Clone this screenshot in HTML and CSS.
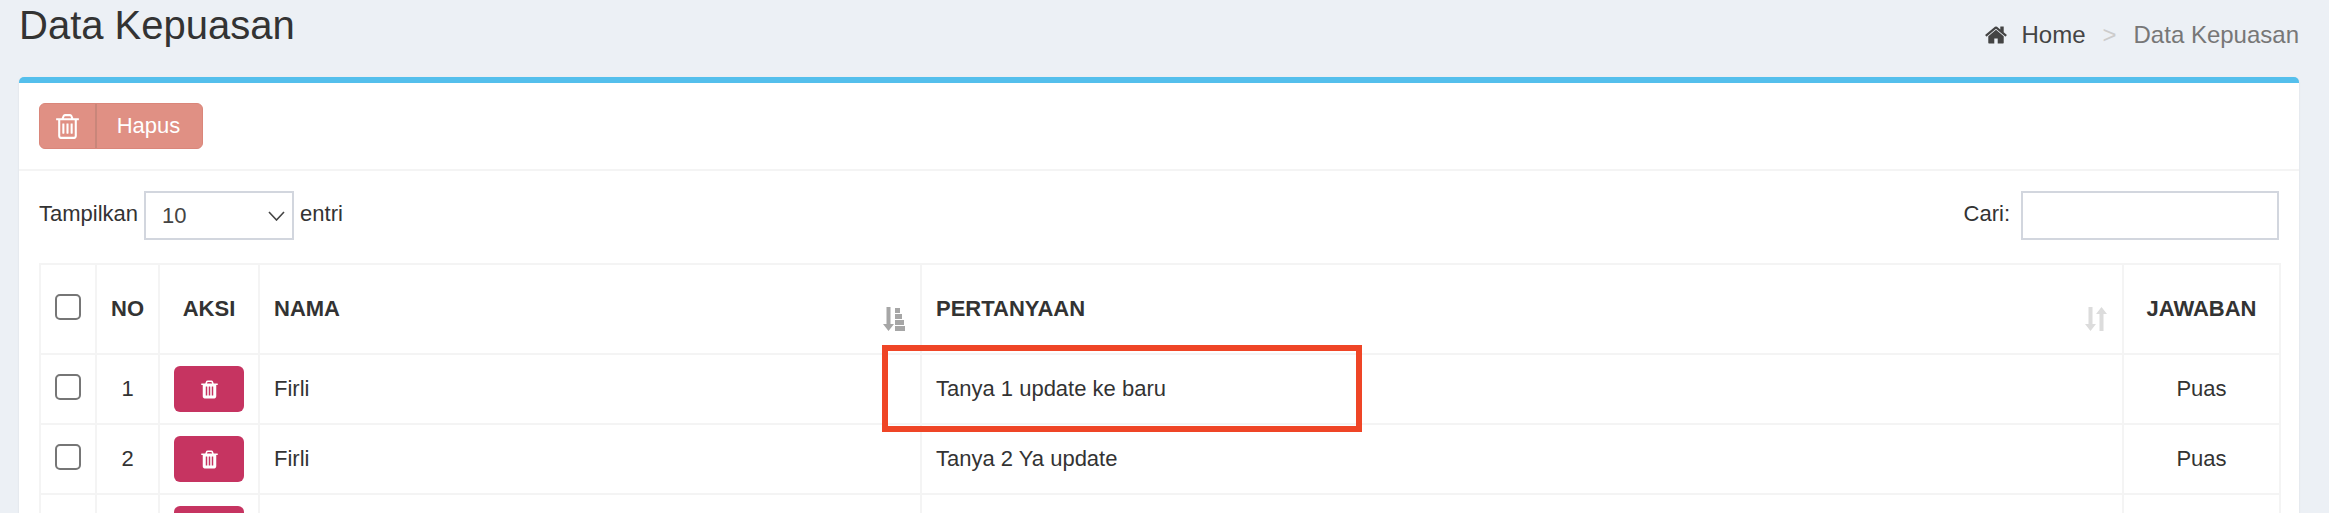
FILE: index.html
```html
<!DOCTYPE html>
<html lang="id">
<head>
    <meta charset="UTF-8">
    <meta name="viewport" content="width=device-width, initial-scale=1.0">
    <title>Data Kepuasan</title>
    <link rel="stylesheet" href="styles.css">
</head>
<body>
    <svg class="icon-defs" width="0" height="0" aria-hidden="true">
        <symbol id="i-trash" viewBox="0 0 1792 1792">
            <path d="M704 1376v-704q0-14-9-23t-23-9h-64q-14 0-23 9t-9 23v704q0 14 9 23t23 9h64q14 0 23-9t9-23zm256 0v-704q0-14-9-23t-23-9h-64q-14 0-23 9t-9 23v704q0 14 9 23t23 9h64q14 0 23-9t9-23zm256 0v-704q0-14-9-23t-23-9h-64q-14 0-23 9t-9 23v704q0 14 9 23t23 9h64q14 0 23-9t9-23zm-544-992h448l-48-117q-7-9-17-11h-317q-10 2-17 11zm928 32v64q0 14-9 23t-23 9h-96v948q0 83-47 143.500t-113 60.500h-832q-66 0-113-58.500t-47-141.500v-952h-96q-14 0-23-9t-9-23v-64q0-14 9-23t23-9h309l70-167q15-37 54-63t79-26h320q40 0 79 26t54 63l70 167h309q14 0 23 9t9 23z"/>
        </symbol>
        <symbol id="i-trash-o" viewBox="0 0 1792 1792">
            <path d="M704 736v576q0 14-9 23t-23 9h-64q-14 0-23-9t-9-23v-576q0-14 9-23t23-9h64q14 0 23 9t9 23zm256 0v576q0 14-9 23t-23 9h-64q-14 0-23-9t-9-23v-576q0-14 9-23t23-9h64q14 0 23 9t9 23zm256 0v576q0 14-9 23t-23 9h-64q-14 0-23-9t-9-23v-576q0-14 9-23t23-9h64q14 0 23 9t9 23zm128 724v-948h-896v948q0 22 7 40.500t14.500 27 10.500 8.500h832q3 0 10.500-8.500t14.500-27 7-40.500zm-672-1076h448l-48-117q-7-9-17-11h-317q-10 2-17 11zm928 32v64q0 14-9 23t-23 9h-96v948q0 83-47 143.500t-113 60.500h-832q-66 0-113-58.500t-47-141.500v-952h-96q-14 0-23-9t-9-23v-64q0-14 9-23t23-9h309l70-167q15-37 54-63t79-26h320q40 0 79 26t54 63l70 167h309q14 0 23 9t9 23z"/>
        </symbol>
        <symbol id="i-home" viewBox="0 0 1792 1792">
            <path d="M1472 992v480q0 26-19 45t-45 19h-384v-384h-256v384h-384q-26 0-45-19t-19-45v-480q0-1 .5-3t.5-3l575-474 575 474q1 2 1 6zm223-69l-62 74q-8 9-21 11h-3q-13 0-21-7l-692-577-692 577q-12 8-24 7-13-2-21-11l-62-74q-8-10-7-23.500t11-21.500l719-599q32-26 76-26t76 26l244 204v-195q0-14 9-23t23-9h192q14 0 23 9t9 23v408l219 182q10 8 11 21.500t-7 23.500z"/>
        </symbol>
    </svg>

    <header class="page-head">
        <h1>Data Kepuasan</h1>
        <ol class="breadcrumb">
            <li class="crumb-home">
                <svg class="icon-home"><use href="#i-home"/></svg>
                <span>Home</span>
            </li>
            <li class="crumb-sep">&gt;</li>
            <li class="crumb-active">Data Kepuasan</li>
        </ol>
    </header>

    <section class="box">
        <div class="box-header">
            <button type="button" class="btn-hapus">
                <span class="btn-icon"><svg class="icon-trash-o"><use href="#i-trash-o"/></svg></span>
                <span class="btn-label">Hapus</span>
            </button>
        </div>

        <div class="box-body">
            <div class="table-tools">
                <label class="length">
                    Tampilkan
                    <span class="select-wrap">
                        <select>
                            <option>10</option>
                            <option>25</option>
                            <option>50</option>
                        </select>
                        <svg class="chevron" viewBox="0 0 17 10"><path d="M1 1l7.500 8L16 1" fill="none" stroke="#444" stroke-width="1.600"/></svg>
                    </span>
                    entri
                </label>
                <label class="search">
                    Cari:
                    <input type="search">
                </label>
            </div>

            <table class="data-table">
                <colgroup>
                    <col class="col-check">
                    <col class="col-no">
                    <col class="col-aksi">
                    <col class="col-nama">
                    <col class="col-tanya">
                    <col class="col-jawab">
                </colgroup>
                <thead>
                    <tr>
                        <th class="center"><input type="checkbox" class="check"></th>
                        <th class="center">NO</th>
                        <th class="center">AKSI</th>
                        <th class="sortable">NAMA
                            <svg class="sort-icon sort-active" viewBox="0 0 22 24">
                                <path d="M3.500 0h4v17H11l-5.500 7L0 17h3.500z"/>
                                <path d="M12 1h5v5h-5zM12 7h7v5h-7zM12 13h9v5h-9zM12 19h10v5H12z"/>
                            </svg>
                        </th>
                        <th class="sortable">PERTANYAAN
                            <svg class="sort-icon" viewBox="0 0 22 24">
                                <path d="M3.500 0h4v17H11l-5.500 7L0 17h3.500z"/>
                                <path d="M14.500 24h4V7H22l-5.500-7L11 7h3.500z"/>
                            </svg>
                        </th>
                        <th class="center">JAWABAN</th>
                    </tr>
                </thead>
                <tbody>
                    <tr>
                        <td class="center"><input type="checkbox" class="check"></td>
                        <td class="center">1</td>
                        <td class="center"><button type="button" class="btn-del"><svg class="icon-trash"><use href="#i-trash"/></svg></button></td>
                        <td>Firli</td>
                        <td>Tanya 1 update ke baru</td>
                        <td class="center">Puas</td>
                    </tr>
                    <tr>
                        <td class="center"><input type="checkbox" class="check"></td>
                        <td class="center">2</td>
                        <td class="center"><button type="button" class="btn-del"><svg class="icon-trash"><use href="#i-trash"/></svg></button></td>
                        <td>Firli</td>
                        <td>Tanya 2 Ya update</td>
                        <td class="center">Puas</td>
                    </tr>
                    <tr>
                        <td class="center"><input type="checkbox" class="check"></td>
                        <td class="center"></td>
                        <td class="center"><button type="button" class="btn-del"><svg class="icon-trash"><use href="#i-trash"/></svg></button></td>
                        <td></td>
                        <td></td>
                        <td class="center"></td>
                    </tr>
                </tbody>
            </table>
        </div>
    </section>

    <!-- kotak penanda di atas tabel -->
    <div class="marker"></div>
</body>
</html>
```

FILE: styles.css
```css
html, body {
    height: 513px;
    overflow: hidden;
}
body {
    position: relative;
    margin: 0;
    padding: 0 30px 0 19px;
    background: #ecf0f5;
    color: #333;
    font-family: "Liberation Sans", Arial, sans-serif;
    font-size: 22px;
}
.icon-defs {
    position: absolute;
}

/* judul halaman */
.page-head {
    display: flex;
    justify-content: space-between;
    height: 77px;
}
.page-head h1 {
    margin: 0;
    padding: 2px 0 0;
    font-size: 40px;
    font-weight: normal;
    line-height: 46px;
}
.breadcrumb {
    display: flex;
    margin: 0;
    padding: 21px 0 0;
    list-style: none;
    font-size: 24px;
    line-height: 28px;
}
.crumb-home {
    display: flex;
    align-items: center;
    gap: 13px;
    height: 28px;
    color: #444;
}
.icon-home {
    width: 24px;
    height: 24px;
    fill: #444;
}
.crumb-sep {
    margin: 0 17px;
    color: #ccc;
}
.crumb-active {
    color: #777;
}

/* box */
.box {
    background: #fff;
    border-top: 6px solid #54bfec;
    border-radius: 5px;
    box-shadow: 0 1px 2px rgba(0, 0, 0, 0.1);
}
.box-header {
    padding: 20px 20px 20px;
    border-bottom: 2px solid #f4f4f4;
}
.btn-hapus {
    display: flex;
    align-items: stretch;
    width: 164px;
    height: 46px;
    padding: 0;
    border: 1px solid #da867a;
    border-radius: 6px;
    background: #e09084;
    color: #fff;
    font-family: inherit;
    font-size: 22px;
}
.btn-icon {
    display: flex;
    align-items: center;
    justify-content: center;
    width: 55px;
    border-right: 2px solid #c9867a;
}
.icon-trash-o {
    width: 29px;
    height: 29px;
    fill: #fff;
}
.btn-label {
    flex: 1;
    padding-right: 2px;
    line-height: 44px;
    text-align: center;
}
.box-body {
    padding: 20px;
}

/* atas tabel */
.table-tools {
    display: flex;
    justify-content: space-between;
    height: 49px;
    margin-bottom: 23px;
}
.length, .search {
    display: flex;
    align-items: center;
    gap: 6px;
    height: 46px;
}
.select-wrap {
    position: relative;
    display: block;
    margin-top: 3px;
}
.select-wrap select {
    display: block;
    width: 150px;
    height: 49px;
    padding: 0 0 0 16px;
    border: 2px solid #d2d6de;
    border-radius: 0;
    background: #fff;
    color: #444;
    font-family: inherit;
    font-size: 22px;
    appearance: none;
}
.chevron {
    position: absolute;
    top: 20px;
    right: 9px;
    width: 17px;
    height: 10px;
}
.search {
    gap: 11px;
}
.search input {
    box-sizing: border-box;
    width: 258px;
    height: 49px;
    margin-top: 3px;
    border: 2px solid #d2d6de;
    border-radius: 0;
    background: #fff;
    appearance: none;
}

/* tabel */
.data-table {
    width: 2240px;
    border-collapse: collapse;
    table-layout: fixed;
}
.col-check { width: 56px; }
.col-no { width: 63px; }
.col-aksi { width: 100px; }
.col-nama { width: 662px; }
.col-tanya { width: 1202px; }
.col-jawab { width: 157px; }
.data-table th, .data-table td {
    padding: 0 14px;
    border: 2px solid #f4f4f4;
    text-align: left;
}
.data-table th {
    position: relative;
    height: 88px;
    font-weight: bold;
}
.data-table td {
    height: 68px;
}
.data-table .center {
    padding: 0;
    text-align: center;
}
.check {
    display: block;
    box-sizing: border-box;
    width: 26px;
    height: 26px;
    margin: 0 auto 4px;
    border: 2px solid #767676;
    border-radius: 5px;
    background: #fff;
    appearance: none;
}
.btn-del {
    display: block;
    width: 70px;
    height: 46px;
    margin: 0 auto;
    padding: 0;
    border: 0;
    border-radius: 6px;
    background: #c63461;
}
.icon-trash {
    display: block;
    width: 21px;
    height: 21px;
    margin: 0 auto;
    fill: #fff;
}
.sort-icon {
    position: absolute;
    right: 15px;
    bottom: 22px;
    width: 22px;
    height: 24px;
    fill: #dcdcdc;
}
.sort-icon.sort-active {
    fill: #a6a6a6;
}

/* penanda merah */
.marker {
    position: absolute;
    top: 345px;
    left: 882px;
    box-sizing: border-box;
    width: 480px;
    height: 87px;
    border: 6px solid #ef4526;
}
```
